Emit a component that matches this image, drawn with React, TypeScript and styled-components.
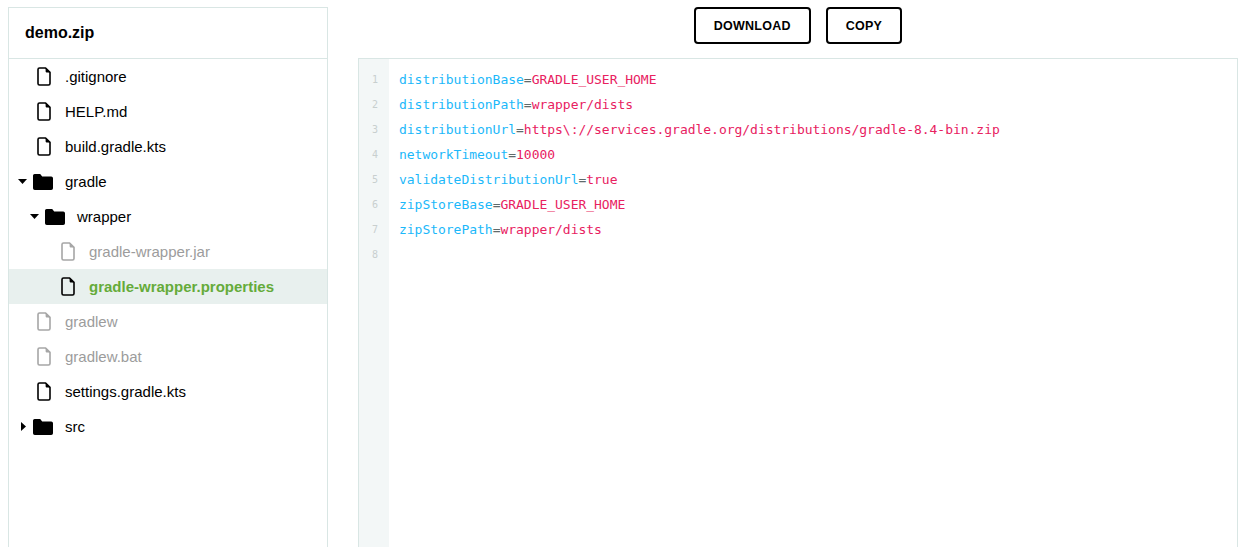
import React from 'react';
import styled, { createGlobalStyle } from 'styled-components';

const GlobalStyle = createGlobalStyle`
  html, body {
    margin: 0;
    padding: 0;
    height: 100%;
    overflow: hidden;
    background: #fff;
    font-family: "Liberation Sans", Arial, sans-serif;
  }
`;

type TreeRow = {
  name: string;
  depth: number;
  kind: 'file' | 'open' | 'closed';
  muted?: boolean;
  selected?: boolean;
};

const rows: TreeRow[] = [
  { name: '.gitignore', depth: 0, kind: 'file' },
  { name: 'HELP.md', depth: 0, kind: 'file' },
  { name: 'build.gradle.kts', depth: 0, kind: 'file' },
  { name: 'gradle', depth: 0, kind: 'open' },
  { name: 'wrapper', depth: 1, kind: 'open' },
  { name: 'gradle-wrapper.jar', depth: 2, kind: 'file', muted: true },
  { name: 'gradle-wrapper.properties', depth: 2, kind: 'file', selected: true },
  { name: 'gradlew', depth: 0, kind: 'file', muted: true },
  { name: 'gradlew.bat', depth: 0, kind: 'file', muted: true },
  { name: 'settings.gradle.kts', depth: 0, kind: 'file' },
  { name: 'src', depth: 0, kind: 'closed' },
];

const codeLines: [string, string][] = [
  ['distributionBase', 'GRADLE_USER_HOME'],
  ['distributionPath', 'wrapper/dists'],
  ['distributionUrl', 'https\\://services.gradle.org/distributions/gradle-8.4-bin.zip'],
  ['networkTimeout', '10000'],
  ['validateDistributionUrl', 'true'],
  ['zipStoreBase', 'GRADLE_USER_HOME'],
  ['zipStorePath', 'wrapper/dists'],
];

const FileIcon = () => (
  <svg width="14" height="19" viewBox="0 0 14 19" fill="none">
    <path
      d="M2.5 1H8.6L13 5.4V16.5A1.5 1.5 0 0 1 11.5 18H2.5A1.5 1.5 0 0 1 1 16.5V2.5A1.5 1.5 0 0 1 2.5 1Z"
      stroke="currentColor"
      strokeWidth="1.6"
      strokeLinejoin="round"
    />
    <path d="M8.6 1L13 5.4H9.4A0.8 0.8 0 0 1 8.6 4.6Z" fill="currentColor" />
  </svg>
);

const FolderIcon = () => (
  <svg width="20" height="16" viewBox="0 0 20 16">
    <path
      d="M1.6 0H7.2L9.2 2.4H18.2A1.8 1.8 0 0 1 20 4.2V14.2A1.8 1.8 0 0 1 18.2 16H1.8A1.8 1.8 0 0 1 0 14.2V1.6A1.6 1.6 0 0 1 1.6 0Z"
      fill="#000"
    />
  </svg>
);

const Caret = ({ open }: { open: boolean }) => (
  <CaretBox $open={open}>
    {open ? (
      <svg width="9" height="5" viewBox="0 0 9 5">
        <path d="M0 0H9L4.5 5Z" fill="#000" />
      </svg>
    ) : (
      <svg width="5" height="9" viewBox="0 0 5 9">
        <path d="M0 0V9L5 4.5Z" fill="#000" />
      </svg>
    )}
  </CaretBox>
);

const App = () => (
  <Page>
    <GlobalStyle />
    <Sidebar>
      <ArchiveName>demo.zip</ArchiveName>
      <Tree>
        {rows.map((row) => (
          <Row key={row.name} $depth={row.depth} $selected={row.selected}>
            {row.kind === 'file' ? (
              <>
                <IconSlot $muted={row.muted}>
                  <FileIcon />
                </IconSlot>
                <RowLabel $muted={row.muted} $selected={row.selected}>
                  {row.name}
                </RowLabel>
              </>
            ) : (
              <>
                <Caret open={row.kind === 'open'} />
                <FolderIcon />
                <FolderLabel>{row.name}</FolderLabel>
              </>
            )}
          </Row>
        ))}
      </Tree>
    </Sidebar>
    <Main>
      <Actions>
        <ActionButton>DOWNLOAD</ActionButton>
        <ActionButton>COPY</ActionButton>
      </Actions>
      <CodePanel>
        <Gutter>
          {[1, 2, 3, 4, 5, 6, 7, 8].map((n) => (
            <LineNumber key={n}>{n}</LineNumber>
          ))}
        </Gutter>
        <Code>
          {codeLines.map(([key, value]) => (
            <CodeLine key={key}>
              <Key>{key}</Key>
              <Equals>=</Equals>
              <Value>{value}</Value>
            </CodeLine>
          ))}
        </Code>
      </CodePanel>
    </Main>
  </Page>
);

const Page = styled.div`
  display: flex;
  height: 547px;
  padding: 7px 16px 0 8px;
  box-sizing: border-box;
  overflow: hidden;
`;

const Sidebar = styled.div`
  width: 320px;
  flex-shrink: 0;
  margin-right: 30px;
  box-sizing: border-box;
  border: 1px solid #d9e6e4;
  border-bottom: none;
`;

const ArchiveName = styled.div`
  height: 50px;
  padding-left: 16px;
  display: flex;
  align-items: center;
  border-bottom: 1px solid #d9e6e4;
  font-size: 16px;
  font-weight: 700;
  color: #000;
`;

const Tree = styled.div`
  display: flex;
  flex-direction: column;
`;

const Row = styled.div<{ $depth: number; $selected?: boolean }>`
  height: 35px;
  display: flex;
  align-items: center;
  padding-left: ${(p) => 9 + p.$depth * 12}px;
  background: ${(p) => (p.$selected ? '#e8f0ee' : 'transparent')};
  color: #000;
`;

const CaretBox = styled.span<{ $open: boolean }>`
  width: 15px;
  box-sizing: border-box;
  padding-left: ${(p) => (p.$open ? 0 : 3)}px;
  display: flex;
  align-items: center;
`;

const IconSlot = styled.span<{ $muted?: boolean }>`
  margin-left: 19px;
  width: 14px;
  height: 19px;
  display: flex;
  color: ${(p) => (p.$muted ? '#a6a6a6' : '#000')};
`;

const RowLabel = styled.span<{ $muted?: boolean; $selected?: boolean }>`
  margin-left: 14px;
  font-size: 15px;
  font-weight: ${(p) => (p.$selected ? 700 : 400)};
  color: ${(p) => (p.$selected ? '#65ab3a' : p.$muted ? '#9c9c9c' : '#000')};
`;

const FolderLabel = styled.span`
  margin-left: 12px;
  font-size: 15px;
  color: #000;
`;

const Main = styled.div`
  flex: 1;
  min-width: 0;
  display: flex;
  flex-direction: column;
`;

const Actions = styled.div`
  height: 37px;
  margin-bottom: 14px;
  display: flex;
  justify-content: center;
  gap: 15px;
`;

const ActionButton = styled.button`
  height: 37px;
  padding: 0 18px;
  box-sizing: border-box;
  background: #fff;
  border: 2px solid #000;
  border-radius: 4px;
  font-family: "Liberation Sans", Arial, sans-serif;
  font-size: 12.5px;
  font-weight: 700;
  letter-spacing: 0.25px;
  color: #000;
`;

const CodePanel = styled.div`
  flex: 1;
  display: flex;
  border: 1px solid #d9e6e4;
  border-bottom: none;
  padding: 0;
`;

const Gutter = styled.div`
  width: 30px;
  flex-shrink: 0;
  padding-top: 8px;
  background: #f3f7f7;
  box-sizing: border-box;
`;

const LineNumber = styled.div`
  height: 25px;
  line-height: 25px;
  padding-left: 13px;
  font-family: "DejaVu Sans Mono", monospace;
  font-size: 10px;
  color: #c8cfcf;
`;

const Code = styled.div`
  flex: 1;
  padding: 8px 0 0 10px;
`;

const CodeLine = styled.div`
  height: 25px;
  line-height: 25px;
  font-family: "DejaVu Sans Mono", monospace;
  font-size: 13px;
  letter-spacing: -0.025px;
  white-space: pre;
`;

const Key = styled.span`
  color: #1bb8fa;
`;

const Equals = styled.span`
  color: #5f6b6b;
`;

const Value = styled.span`
  color: #e8215f;
`;

export default App;
